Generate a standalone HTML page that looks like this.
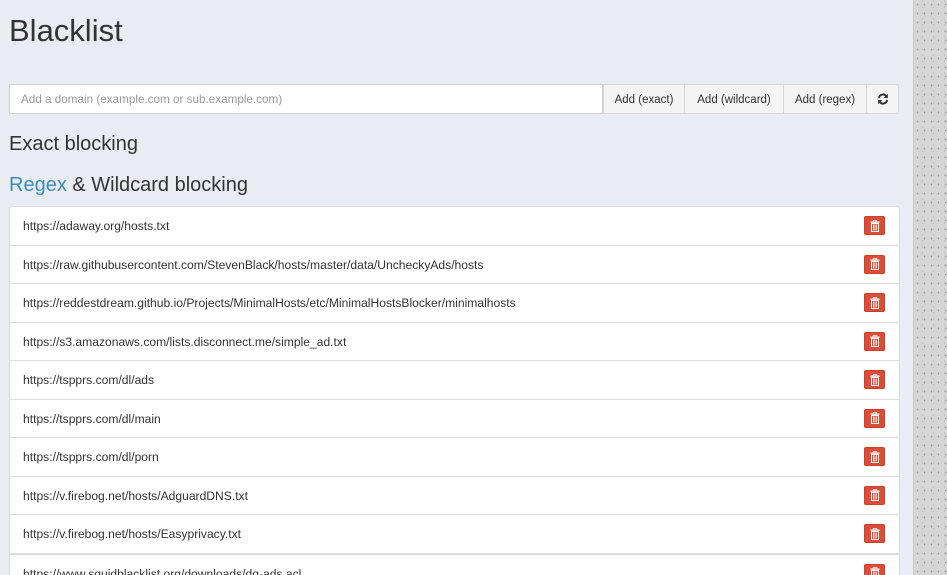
<!DOCTYPE html>
<html><head><meta charset="utf-8"><style>
html,body{margin:0;padding:0;width:947px;height:575px;overflow:hidden;font-family:"Liberation Sans",sans-serif;}
body{background:#e9ecf3;position:relative;}
.side{position:absolute;left:913px;top:0;width:34px;height:575px;background:#d6d6d6;border-left:1px solid #c8c8c8;
background-image:radial-gradient(#9a9a9a 0.6px,transparent 0.9px),radial-gradient(#b0b0b0 0.6px,transparent 0.9px);
background-size:7px 9px,11px 6px;background-position:0 0,3px 4px;}
h1{position:absolute;left:9px;top:13px;margin:0;font-weight:normal;font-size:31px;color:#333;}
.inp{position:absolute;left:9px;top:84px;width:594px;height:30px;background:#fff;border:1px solid #cfd2d9;box-sizing:border-box;
font-size:11.7px;color:#999;line-height:29px;padding-left:11px;}
.btns{position:absolute;left:603px;top:84px;height:30px;display:flex;border:1px solid #d6d6d6;border-left:none;border-radius:0 3px 3px 0;box-sizing:border-box;background:#f4f4f4;}
.btns div{font-size:11.5px;color:#333;line-height:30px;text-align:center;border-left:1px solid #d6d6d6;box-sizing:border-box;}
.btns div.r{width:32px;display:flex;align-items:center;justify-content:center;}
h3{position:absolute;left:9px;margin:0;font-weight:normal;font-size:20px;color:#333;}
h3 span{color:#3c8dbc;}
.list{position:absolute;left:9px;top:206px;width:891px;background:#fff;border:1px solid #dcdcdc;border-radius:3px;box-sizing:border-box;height:400px;overflow:hidden;}
.row{height:38.5px;border-bottom:1px solid #dedede;box-sizing:border-box;position:relative;font-size:12.1px;color:#333;line-height:38px;padding-left:13px;}
.row.t{border-top:1px solid #d9d9d9;}
.del{position:absolute;left:854px;top:9px;width:21px;height:19px;background:#dd4b39;border-radius:2px;border:1px solid #c9402f;box-sizing:border-box;display:flex;align-items:center;justify-content:center;}
</style></head><body>
<div class="side"></div>
<h1>Blacklist</h1>
<div class="inp">Add a domain (example.com or sub.example.com)</div>
<div class="btns"><div style="width:81px">Add (exact)</div><div style="width:99px">Add (wildcard)</div><div style="width:83px">Add (regex)</div><div class="r"><svg width="12" height="12" viewBox="0 0 12 12"><path d="M2 5A4 4 0 0 1 9.3 3.2" fill="none" stroke="#333" stroke-width="2"/><path d="M10.8 0.8V5H6.6z" fill="#333"/><path d="M10 7A4 4 0 0 1 2.7 8.8" fill="none" stroke="#333" stroke-width="2"/><path d="M1.2 11.2V7H5.4z" fill="#333"/></svg></div></div>
<h3 style="top:133px">Exact blocking</h3>
<h3 style="top:174px"><span>Regex</span> &amp; Wildcard blocking</h3>
<div class="list">
<div class="row">https://adaway.org/hosts.txt<div class="del"><svg width="10" height="12" viewBox="0 0 10 12"><rect x="0.5" y="1.5" width="9" height="1.3" fill="#fff"/><rect x="3.3" y="0.3" width="3.4" height="1.5" fill="none" stroke="#fff" stroke-width="0.8"/><path d="M1.5 3.5h7v8h-7z" fill="none" stroke="#fff" stroke-width="1"/><path d="M3.5 4.5v6M5 4.5v6M6.5 4.5v6" stroke="#fff" stroke-width="0.8"/></svg></div></div>
<div class="row">https://raw.githubusercontent.com/StevenBlack/hosts/master/data/UncheckyAds/hosts<div class="del"><svg width="10" height="12" viewBox="0 0 10 12"><rect x="0.5" y="1.5" width="9" height="1.3" fill="#fff"/><rect x="3.3" y="0.3" width="3.4" height="1.5" fill="none" stroke="#fff" stroke-width="0.8"/><path d="M1.5 3.5h7v8h-7z" fill="none" stroke="#fff" stroke-width="1"/><path d="M3.5 4.5v6M5 4.5v6M6.5 4.5v6" stroke="#fff" stroke-width="0.8"/></svg></div></div>
<div class="row">https://reddestdream.github.io/Projects/MinimalHosts/etc/MinimalHostsBlocker/minimalhosts<div class="del"><svg width="10" height="12" viewBox="0 0 10 12"><rect x="0.5" y="1.5" width="9" height="1.3" fill="#fff"/><rect x="3.3" y="0.3" width="3.4" height="1.5" fill="none" stroke="#fff" stroke-width="0.8"/><path d="M1.5 3.5h7v8h-7z" fill="none" stroke="#fff" stroke-width="1"/><path d="M3.5 4.5v6M5 4.5v6M6.5 4.5v6" stroke="#fff" stroke-width="0.8"/></svg></div></div>
<div class="row">https://s3.amazonaws.com/lists.disconnect.me/simple_ad.txt<div class="del"><svg width="10" height="12" viewBox="0 0 10 12"><rect x="0.5" y="1.5" width="9" height="1.3" fill="#fff"/><rect x="3.3" y="0.3" width="3.4" height="1.5" fill="none" stroke="#fff" stroke-width="0.8"/><path d="M1.5 3.5h7v8h-7z" fill="none" stroke="#fff" stroke-width="1"/><path d="M3.5 4.5v6M5 4.5v6M6.5 4.5v6" stroke="#fff" stroke-width="0.8"/></svg></div></div>
<div class="row">https://tspprs.com/dl/ads<div class="del"><svg width="10" height="12" viewBox="0 0 10 12"><rect x="0.5" y="1.5" width="9" height="1.3" fill="#fff"/><rect x="3.3" y="0.3" width="3.4" height="1.5" fill="none" stroke="#fff" stroke-width="0.8"/><path d="M1.5 3.5h7v8h-7z" fill="none" stroke="#fff" stroke-width="1"/><path d="M3.5 4.5v6M5 4.5v6M6.5 4.5v6" stroke="#fff" stroke-width="0.8"/></svg></div></div>
<div class="row">https://tspprs.com/dl/main<div class="del"><svg width="10" height="12" viewBox="0 0 10 12"><rect x="0.5" y="1.5" width="9" height="1.3" fill="#fff"/><rect x="3.3" y="0.3" width="3.4" height="1.5" fill="none" stroke="#fff" stroke-width="0.8"/><path d="M1.5 3.5h7v8h-7z" fill="none" stroke="#fff" stroke-width="1"/><path d="M3.5 4.5v6M5 4.5v6M6.5 4.5v6" stroke="#fff" stroke-width="0.8"/></svg></div></div>
<div class="row">https://tspprs.com/dl/porn<div class="del"><svg width="10" height="12" viewBox="0 0 10 12"><rect x="0.5" y="1.5" width="9" height="1.3" fill="#fff"/><rect x="3.3" y="0.3" width="3.4" height="1.5" fill="none" stroke="#fff" stroke-width="0.8"/><path d="M1.5 3.5h7v8h-7z" fill="none" stroke="#fff" stroke-width="1"/><path d="M3.5 4.5v6M5 4.5v6M6.5 4.5v6" stroke="#fff" stroke-width="0.8"/></svg></div></div>
<div class="row">https://v.firebog.net/hosts/AdguardDNS.txt<div class="del"><svg width="10" height="12" viewBox="0 0 10 12"><rect x="0.5" y="1.5" width="9" height="1.3" fill="#fff"/><rect x="3.3" y="0.3" width="3.4" height="1.5" fill="none" stroke="#fff" stroke-width="0.8"/><path d="M1.5 3.5h7v8h-7z" fill="none" stroke="#fff" stroke-width="1"/><path d="M3.5 4.5v6M5 4.5v6M6.5 4.5v6" stroke="#fff" stroke-width="0.8"/></svg></div></div>
<div class="row">https://v.firebog.net/hosts/Easyprivacy.txt<div class="del"><svg width="10" height="12" viewBox="0 0 10 12"><rect x="0.5" y="1.5" width="9" height="1.3" fill="#fff"/><rect x="3.3" y="0.3" width="3.4" height="1.5" fill="none" stroke="#fff" stroke-width="0.8"/><path d="M1.5 3.5h7v8h-7z" fill="none" stroke="#fff" stroke-width="1"/><path d="M3.5 4.5v6M5 4.5v6M6.5 4.5v6" stroke="#fff" stroke-width="0.8"/></svg></div></div>
<div class="row t">https://www.squidblacklist.org/downloads/dg-ads.acl<div class="del"><svg width="10" height="12" viewBox="0 0 10 12"><rect x="0.5" y="1.5" width="9" height="1.3" fill="#fff"/><rect x="3.3" y="0.3" width="3.4" height="1.5" fill="none" stroke="#fff" stroke-width="0.8"/><path d="M1.5 3.5h7v8h-7z" fill="none" stroke="#fff" stroke-width="1"/><path d="M3.5 4.5v6M5 4.5v6M6.5 4.5v6" stroke="#fff" stroke-width="0.8"/></svg></div></div>
</div>
</body></html>
